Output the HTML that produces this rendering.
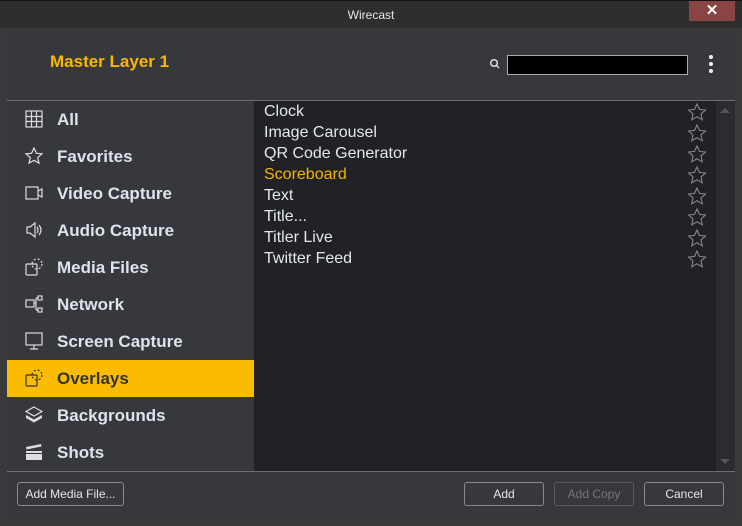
<!DOCTYPE html>
<html><head><style>
*{margin:0;padding:0;box-sizing:border-box}
body{width:742px;height:526px;background:#3a3a3c;position:relative;overflow:hidden;font-family:"Liberation Sans",sans-serif}
.abs{position:absolute}
.title{left:0;top:0;width:742px;height:28px;background:#2e2e2e;color:#e6e6e6;font-size:12px;text-align:center;line-height:28px;border-top:1px solid #111}
.close{left:689px;top:1px;width:46px;height:20px;background:#8a4444;color:#fff;font-size:15px;font-weight:bold;text-align:center;line-height:20px}
.win{left:7px;top:28px;width:728px;height:490px;background:#37383c}
.side .it{position:absolute;left:0;width:247px;height:37px;color:#dde3ee;font-weight:bold;font-size:17px;line-height:37px;padding-left:50px}
.side .it svg{position:absolute;left:18px;top:9px}
.sel{background:#fbbb00;color:#333 !important}
.list div{position:absolute;left:10px;font-size:16px;color:#e4e8ee;height:21px;line-height:21px;white-space:nowrap}
.btn{position:absolute;height:24px;border:1px solid #8a8a8a;border-radius:3px;color:#e6e6e6;font-size:12px;text-align:center;line-height:22px}
</style></head><body>
<div class="abs title">Wirecast</div>
<div class="abs close">✕</div>
<div class="abs win">
 <div class="abs" style="left:43px;top:24px;color:#f8b800;font-weight:bold;font-size:17px">Master Layer 1</div>
 <svg class="abs" style="left:482px;top:30px" width="12" height="12"><circle cx="5" cy="5" r="3.3" fill="none" stroke="#ddd" stroke-width="1.5"/><line x1="7.5" y1="7.5" x2="10" y2="10" stroke="#ddd" stroke-width="1.5"/></svg>
 <div class="abs" style="left:500px;top:27px;width:181px;height:20px;background:#000;border:1px solid #aaa"></div>
 <div class="abs" style="left:702px;top:27px;width:4px;height:4px;border-radius:2px;background:#eee;box-shadow:0 7px 0 #eee,0 14px 0 #eee"></div>
 <div class="abs" style="left:0;top:72px;width:728px;height:1px;background:#6d6d6d"></div>
 <div class="abs" style="left:247px;top:73px;width:462px;height:370px;background:#212226"></div>
 <div class="abs" style="left:709px;top:73px;width:19px;height:370px;background:#2b2c30"></div>
 <div class="abs" style="left:713px;top:80px;border:5px solid transparent;border-bottom:5px solid #555;border-top:0"></div>
 <div class="abs" style="left:713px;top:431px;border:5px solid transparent;border-top:5px solid #555;border-bottom:0"></div>
 <div class="side">
  <div class="it" style="top:73px"><svg width="18" height="18"><g fill="none" stroke="#ddd" stroke-width="1.2"><rect x="1" y="1" width="16" height="16"/><path d="M6.5 1V17M11.5 1V17M1 6.5H17M1 11.5H17"/></g></svg>All</div>
  <div class="it" style="top:110px"><svg width="18" height="18"><path d="M9 1l2.4 5.3 5.6.5-4.3 3.8 1.3 5.6L9 13.3 4 16.2l1.3-5.6L1 6.8l5.6-.5z" fill="none" stroke="#ddd" stroke-width="1.2"/></svg>Favorites</div>
  <div class="it" style="top:147px"><svg width="18" height="18"><g fill="none" stroke="#ddd" stroke-width="1.2"><rect x="1" y="3" width="12" height="12"/><path d="M13 7l4-2v8l-4-2"/></g></svg>Video Capture</div>
  <div class="it" style="top:184px"><svg width="18" height="18"><g fill="none" stroke="#ddd" stroke-width="1.2"><path d="M2 6h3l5-4v14l-5-4H2z"/><path d="M12 6q2 3 0 6M14 4q4 5 0 10"/></g></svg>Audio Capture</div>
  <div class="it" style="top:221px"><svg width="18" height="18"><g fill="none" stroke="#ddd" stroke-width="1.2"><rect x="1" y="6" width="11" height="11" rx="1"/><circle cx="12" cy="6" r="5" stroke-dasharray="2 2"/></g></svg>Media Files</div>
  <div class="it" style="top:258px"><svg width="18" height="18"><g fill="none" stroke="#ddd" stroke-width="1.2"><rect x="1" y="5" width="8" height="7"/><rect x="13" y="1" width="4" height="4"/><rect x="13" y="13" width="4" height="4"/><path d="M9 8h2M11 3v12M11 3h2M11 15h2"/></g></svg>Network</div>
  <div class="it" style="top:295px"><svg width="18" height="18"><g fill="none" stroke="#ddd" stroke-width="1.2"><rect x="1" y="1" width="16" height="12"/><path d="M9 13v4M5 17h8"/></g></svg>Screen Capture</div>
  <div class="it sel" style="top:332px"><svg width="18" height="18"><g fill="none" stroke="#333" stroke-width="1.2"><rect x="1" y="6" width="11" height="11" rx="1"/><circle cx="12" cy="6" r="5" stroke-dasharray="2 2"/></g></svg>Overlays</div>
  <div class="it" style="top:369px"><svg width="18" height="18"><g fill="#ddd"><path d="M9 1l8 4.5-8 4.5-8-4.5z" fill="none" stroke="#ddd" stroke-width="1.2"/><path d="M1 9l8 4.5 8-4.5v3l-8 4.5-8-4.5z"/></g></svg>Backgrounds</div>
  <div class="it" style="top:406px"><svg width="18" height="18"><g fill="#ddd"><path d="M1 4l15-3 .5 2.5-15 3z"/><rect x="1" y="8" width="16" height="9"/><rect x="1" y="10" width="16" height="1" fill="#37383c"/></g></svg>Shots</div>
 </div>
 <div class="list abs" style="left:247px;top:0;width:400px">
  <div style="top:73px">Clock</div><div style="top:94px">Image Carousel</div><div style="top:115px">QR Code Generator</div><div style="top:136px;color:#f4b400">Scoreboard</div><div style="top:157px">Text</div><div style="top:178px">Title...</div><div style="top:199px">Titler Live</div><div style="top:220px">Twitter Feed</div>
 </div>
 <svg class="abs" style="left:680px;top:74px" width="22" height="170"><g fill="none" stroke="#888" stroke-width="1.1">
  <path id="s" d="M10 2l2.5 5.4 5.9.6-4.4 4 1.3 5.8L10 14.8 4.7 17.8 6 12 1.6 8l5.9-.6z"/>
  <use href="#s" y="21"/><use href="#s" y="42"/><use href="#s" y="63"/><use href="#s" y="84"/><use href="#s" y="105"/><use href="#s" y="126"/><use href="#s" y="147"/></g></svg>
 <div class="abs" style="left:0;top:443px;width:728px;height:1px;background:#6d6d6d"></div>
 <div class="btn" style="left:10px;top:454px;width:107px">Add Media File...</div>
 <div class="btn" style="left:457px;top:454px;width:80px">Add</div>
 <div class="btn" style="left:547px;top:454px;width:80px;color:#777;border-color:#5a5a5a">Add Copy</div>
 <div class="btn" style="left:637px;top:454px;width:80px">Cancel</div>
</div>
</body></html>
